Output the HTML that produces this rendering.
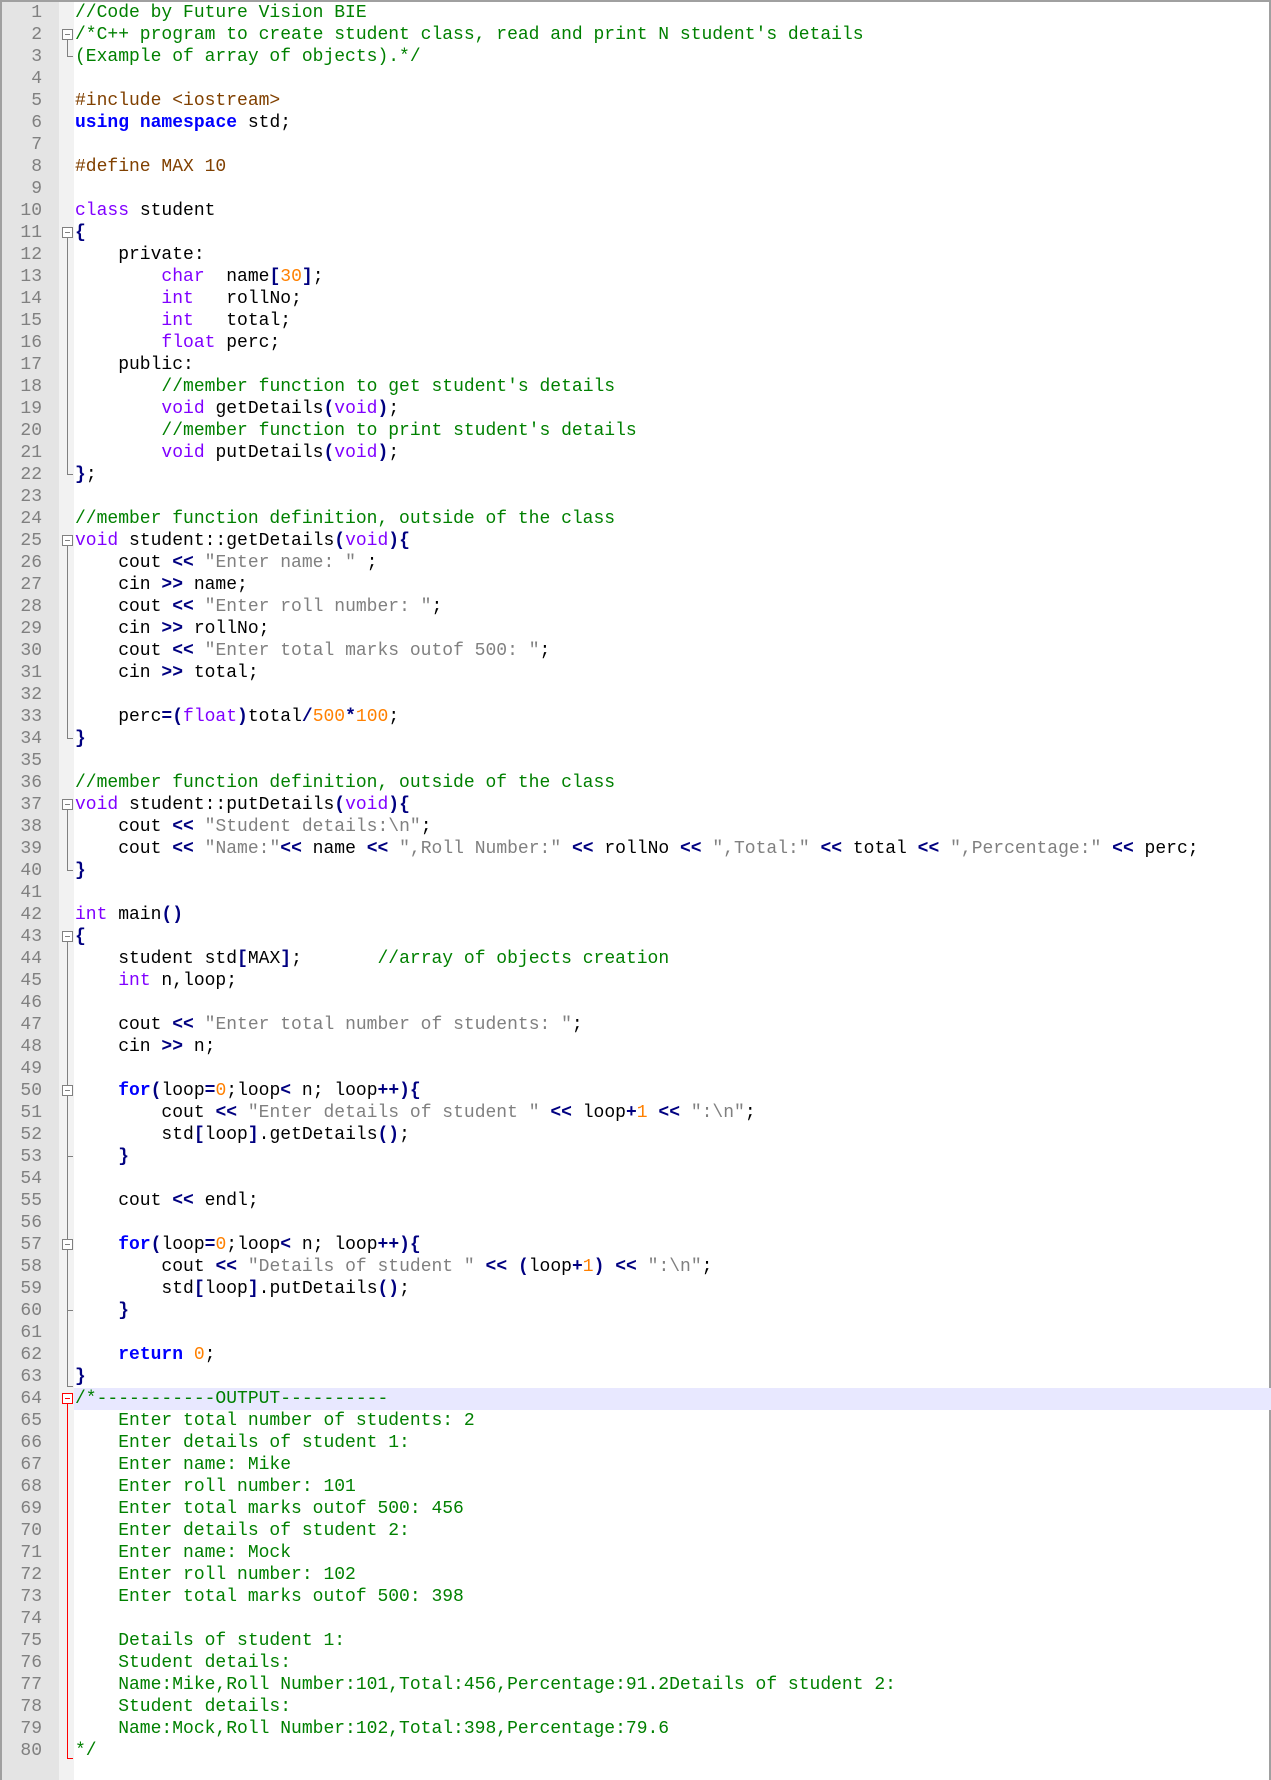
<!DOCTYPE html>
<html><head><meta charset="utf-8"><style>
body{margin:0;background:#fff;width:1271px;height:1780px;overflow:hidden;position:relative;font-family:"Liberation Mono","Courier New",monospace;font-size:18px;}
#gut{position:absolute;left:0;top:0;width:59px;height:1780px;background:#e4e4e4;border-left:2px solid #a0a0a0;box-sizing:border-box}
#fold{position:absolute;left:59px;top:0;width:15px;height:1780px;background:#f2f2f2}
#top{position:absolute;left:0;top:0;width:1271px;height:2px;background:#a0a0a0}
#right{position:absolute;right:0;top:0;width:2px;height:1780px;background:#a0a0a0}
.ln{position:absolute;left:0;width:1271px;height:22px;line-height:22px;white-space:pre}
.num{position:absolute;left:0;width:42px;text-align:right;color:#808080}
.code{position:absolute;left:75px;color:#000}
.c{color:#008000}.p{color:#804000}.k{color:#0000ff;font-weight:bold}.t{color:#8000ff}.s{color:#808080}.n{color:#ff8000}.o{color:#000080;font-weight:bold}
.hl{position:absolute;left:74px;width:1197px;height:22px;background:#e8e8ff}
.box{position:absolute;left:62px;width:9px;height:9px;border:1px solid #808080;background:#fff;box-sizing:content-box}
.box:after{content:"";position:absolute;left:2px;top:4px;width:5px;height:1px;background:#808080}
.vl{position:absolute;left:67px;width:1px;background:#808080}
.el{position:absolute;left:67px;width:6px;height:1px;background:#808080}
.red{border-color:#ff0000!important}.red:after{background:#ff0000!important}
.rv{background:#ff0000!important}
</style></head><body>
<div id="gut"></div><div id="fold"></div><div id="top"></div><div id="right"></div>
<div class="hl" style="top:1388px"></div>

<!-- fold markers: line n top = 2+(n-1)*22 -->
<div class="box" style="top:29px"></div><div class="vl" style="top:40px;height:16px"></div><div class="el" style="top:56px"></div>
<div class="box" style="top:227px"></div><div class="vl" style="top:238px;height:236px"></div><div class="el" style="top:474px"></div>
<div class="box" style="top:535px"></div><div class="vl" style="top:546px;height:192px"></div><div class="el" style="top:738px"></div>
<div class="box" style="top:799px"></div><div class="vl" style="top:810px;height:60px"></div><div class="el" style="top:870px"></div>
<div class="box" style="top:931px"></div><div class="vl" style="top:942px;height:444px"></div><div class="el" style="top:1386px"></div>
<div class="box" style="top:1085px"></div><div class="el" style="top:1156px"></div>
<div class="box" style="top:1239px"></div><div class="el" style="top:1310px"></div>
<div class="box red" style="top:1393px"></div><div class="vl rv" style="top:1404px;height:354px"></div><div class="el rv" style="top:1758px"></div>

<div class="ln" style="top:2px"><span class="num">1</span><span class="code"><span class="c">//Code by Future Vision BIE</span></span></div>
<div class="ln" style="top:24px"><span class="num">2</span><span class="code"><span class="c">/*C++ program to create student class, read and print N student's details</span></span></div>
<div class="ln" style="top:46px"><span class="num">3</span><span class="code"><span class="c">(Example of array of objects).*/</span></span></div>
<div class="ln" style="top:68px"><span class="num">4</span></div>
<div class="ln" style="top:90px"><span class="num">5</span><span class="code"><span class="p">#include &lt;iostream&gt;</span></span></div>
<div class="ln" style="top:112px"><span class="num">6</span><span class="code"><span class="k">using</span> <span class="k">namespace</span> std;</span></div>
<div class="ln" style="top:134px"><span class="num">7</span></div>
<div class="ln" style="top:156px"><span class="num">8</span><span class="code"><span class="p">#define MAX 10</span></span></div>
<div class="ln" style="top:178px"><span class="num">9</span></div>
<div class="ln" style="top:200px"><span class="num">10</span><span class="code"><span class="t">class</span> student</span></div>
<div class="ln" style="top:222px"><span class="num">11</span><span class="code"><span class="o">{</span></span></div>
<div class="ln" style="top:244px"><span class="num">12</span><span class="code">    private:</span></div>
<div class="ln" style="top:266px"><span class="num">13</span><span class="code">        <span class="t">char</span>  name<span class="o">[</span><span class="n">30</span><span class="o">]</span>;</span></div>
<div class="ln" style="top:288px"><span class="num">14</span><span class="code">        <span class="t">int</span>   rollNo;</span></div>
<div class="ln" style="top:310px"><span class="num">15</span><span class="code">        <span class="t">int</span>   total;</span></div>
<div class="ln" style="top:332px"><span class="num">16</span><span class="code">        <span class="t">float</span> perc;</span></div>
<div class="ln" style="top:354px"><span class="num">17</span><span class="code">    public:</span></div>
<div class="ln" style="top:376px"><span class="num">18</span><span class="code">        <span class="c">//member function to get student's details</span></span></div>
<div class="ln" style="top:398px"><span class="num">19</span><span class="code">        <span class="t">void</span> getDetails<span class="o">(</span><span class="t">void</span><span class="o">)</span>;</span></div>
<div class="ln" style="top:420px"><span class="num">20</span><span class="code">        <span class="c">//member function to print student's details</span></span></div>
<div class="ln" style="top:442px"><span class="num">21</span><span class="code">        <span class="t">void</span> putDetails<span class="o">(</span><span class="t">void</span><span class="o">)</span>;</span></div>
<div class="ln" style="top:464px"><span class="num">22</span><span class="code"><span class="o">}</span>;</span></div>
<div class="ln" style="top:486px"><span class="num">23</span></div>
<div class="ln" style="top:508px"><span class="num">24</span><span class="code"><span class="c">//member function definition, outside of the class</span></span></div>
<div class="ln" style="top:530px"><span class="num">25</span><span class="code"><span class="t">void</span> student::getDetails<span class="o">(</span><span class="t">void</span><span class="o">){</span></span></div>
<div class="ln" style="top:552px"><span class="num">26</span><span class="code">    cout <span class="o">&lt;&lt;</span> <span class="s">"Enter name: "</span> ;</span></div>
<div class="ln" style="top:574px"><span class="num">27</span><span class="code">    cin <span class="o">&gt;&gt;</span> name;</span></div>
<div class="ln" style="top:596px"><span class="num">28</span><span class="code">    cout <span class="o">&lt;&lt;</span> <span class="s">"Enter roll number: "</span>;</span></div>
<div class="ln" style="top:618px"><span class="num">29</span><span class="code">    cin <span class="o">&gt;&gt;</span> rollNo;</span></div>
<div class="ln" style="top:640px"><span class="num">30</span><span class="code">    cout <span class="o">&lt;&lt;</span> <span class="s">"Enter total marks outof 500: "</span>;</span></div>
<div class="ln" style="top:662px"><span class="num">31</span><span class="code">    cin <span class="o">&gt;&gt;</span> total;</span></div>
<div class="ln" style="top:684px"><span class="num">32</span></div>
<div class="ln" style="top:706px"><span class="num">33</span><span class="code">    perc<span class="o">=(</span><span class="t">float</span><span class="o">)</span>total<span class="o">/</span><span class="n">500</span><span class="o">*</span><span class="n">100</span>;</span></div>
<div class="ln" style="top:728px"><span class="num">34</span><span class="code"><span class="o">}</span></span></div>
<div class="ln" style="top:750px"><span class="num">35</span></div>
<div class="ln" style="top:772px"><span class="num">36</span><span class="code"><span class="c">//member function definition, outside of the class</span></span></div>
<div class="ln" style="top:794px"><span class="num">37</span><span class="code"><span class="t">void</span> student::putDetails<span class="o">(</span><span class="t">void</span><span class="o">){</span></span></div>
<div class="ln" style="top:816px"><span class="num">38</span><span class="code">    cout <span class="o">&lt;&lt;</span> <span class="s">"Student details:\n"</span>;</span></div>
<div class="ln" style="top:838px"><span class="num">39</span><span class="code">    cout <span class="o">&lt;&lt;</span> <span class="s">"Name:"</span><span class="o">&lt;&lt;</span> name <span class="o">&lt;&lt;</span> <span class="s">",Roll Number:"</span> <span class="o">&lt;&lt;</span> rollNo <span class="o">&lt;&lt;</span> <span class="s">",Total:"</span> <span class="o">&lt;&lt;</span> total <span class="o">&lt;&lt;</span> <span class="s">",Percentage:"</span> <span class="o">&lt;&lt;</span> perc;</span></div>
<div class="ln" style="top:860px"><span class="num">40</span><span class="code"><span class="o">}</span></span></div>
<div class="ln" style="top:882px"><span class="num">41</span></div>
<div class="ln" style="top:904px"><span class="num">42</span><span class="code"><span class="t">int</span> main<span class="o">()</span></span></div>
<div class="ln" style="top:926px"><span class="num">43</span><span class="code"><span class="o">{</span></span></div>
<div class="ln" style="top:948px"><span class="num">44</span><span class="code">    student std<span class="o">[</span>MAX<span class="o">]</span>;       <span class="c">//array of objects creation</span></span></div>
<div class="ln" style="top:970px"><span class="num">45</span><span class="code">    <span class="t">int</span> n,loop;</span></div>
<div class="ln" style="top:992px"><span class="num">46</span></div>
<div class="ln" style="top:1014px"><span class="num">47</span><span class="code">    cout <span class="o">&lt;&lt;</span> <span class="s">"Enter total number of students: "</span>;</span></div>
<div class="ln" style="top:1036px"><span class="num">48</span><span class="code">    cin <span class="o">&gt;&gt;</span> n;</span></div>
<div class="ln" style="top:1058px"><span class="num">49</span></div>
<div class="ln" style="top:1080px"><span class="num">50</span><span class="code">    <span class="k">for</span><span class="o">(</span>loop<span class="o">=</span><span class="n">0</span>;loop<span class="o">&lt;</span> n; loop<span class="o">++){</span></span></div>
<div class="ln" style="top:1102px"><span class="num">51</span><span class="code">        cout <span class="o">&lt;&lt;</span> <span class="s">"Enter details of student "</span> <span class="o">&lt;&lt;</span> loop<span class="o">+</span><span class="n">1</span> <span class="o">&lt;&lt;</span> <span class="s">":\n"</span>;</span></div>
<div class="ln" style="top:1124px"><span class="num">52</span><span class="code">        std<span class="o">[</span>loop<span class="o">]</span>.getDetails<span class="o">()</span>;</span></div>
<div class="ln" style="top:1146px"><span class="num">53</span><span class="code">    <span class="o">}</span></span></div>
<div class="ln" style="top:1168px"><span class="num">54</span></div>
<div class="ln" style="top:1190px"><span class="num">55</span><span class="code">    cout <span class="o">&lt;&lt;</span> endl;</span></div>
<div class="ln" style="top:1212px"><span class="num">56</span></div>
<div class="ln" style="top:1234px"><span class="num">57</span><span class="code">    <span class="k">for</span><span class="o">(</span>loop<span class="o">=</span><span class="n">0</span>;loop<span class="o">&lt;</span> n; loop<span class="o">++){</span></span></div>
<div class="ln" style="top:1256px"><span class="num">58</span><span class="code">        cout <span class="o">&lt;&lt;</span> <span class="s">"Details of student "</span> <span class="o">&lt;&lt;</span> <span class="o">(</span>loop<span class="o">+</span><span class="n">1</span><span class="o">)</span> <span class="o">&lt;&lt;</span> <span class="s">":\n"</span>;</span></div>
<div class="ln" style="top:1278px"><span class="num">59</span><span class="code">        std<span class="o">[</span>loop<span class="o">]</span>.putDetails<span class="o">()</span>;</span></div>
<div class="ln" style="top:1300px"><span class="num">60</span><span class="code">    <span class="o">}</span></span></div>
<div class="ln" style="top:1322px"><span class="num">61</span></div>
<div class="ln" style="top:1344px"><span class="num">62</span><span class="code">    <span class="k">return</span> <span class="n">0</span>;</span></div>
<div class="ln" style="top:1366px"><span class="num">63</span><span class="code"><span class="o">}</span></span></div>
<div class="ln" style="top:1388px"><span class="num">64</span><span class="code"><span class="c">/*-----------OUTPUT----------</span></span></div>
<div class="ln" style="top:1410px"><span class="num">65</span><span class="code c">    Enter total number of students: 2</span></div>
<div class="ln" style="top:1432px"><span class="num">66</span><span class="code c">    Enter details of student 1:</span></div>
<div class="ln" style="top:1454px"><span class="num">67</span><span class="code c">    Enter name: Mike</span></div>
<div class="ln" style="top:1476px"><span class="num">68</span><span class="code c">    Enter roll number: 101</span></div>
<div class="ln" style="top:1498px"><span class="num">69</span><span class="code c">    Enter total marks outof 500: 456</span></div>
<div class="ln" style="top:1520px"><span class="num">70</span><span class="code c">    Enter details of student 2:</span></div>
<div class="ln" style="top:1542px"><span class="num">71</span><span class="code c">    Enter name: Mock</span></div>
<div class="ln" style="top:1564px"><span class="num">72</span><span class="code c">    Enter roll number: 102</span></div>
<div class="ln" style="top:1586px"><span class="num">73</span><span class="code c">    Enter total marks outof 500: 398</span></div>
<div class="ln" style="top:1608px"><span class="num">74</span></div>
<div class="ln" style="top:1630px"><span class="num">75</span><span class="code c">    Details of student 1:</span></div>
<div class="ln" style="top:1652px"><span class="num">76</span><span class="code c">    Student details:</span></div>
<div class="ln" style="top:1674px"><span class="num">77</span><span class="code c">    Name:Mike,Roll Number:101,Total:456,Percentage:91.2Details of student 2:</span></div>
<div class="ln" style="top:1696px"><span class="num">78</span><span class="code c">    Student details:</span></div>
<div class="ln" style="top:1718px"><span class="num">79</span><span class="code c">    Name:Mock,Roll Number:102,Total:398,Percentage:79.6</span></div>
<div class="ln" style="top:1740px"><span class="num">80</span><span class="code c">*/</span></div>
</body></html>
